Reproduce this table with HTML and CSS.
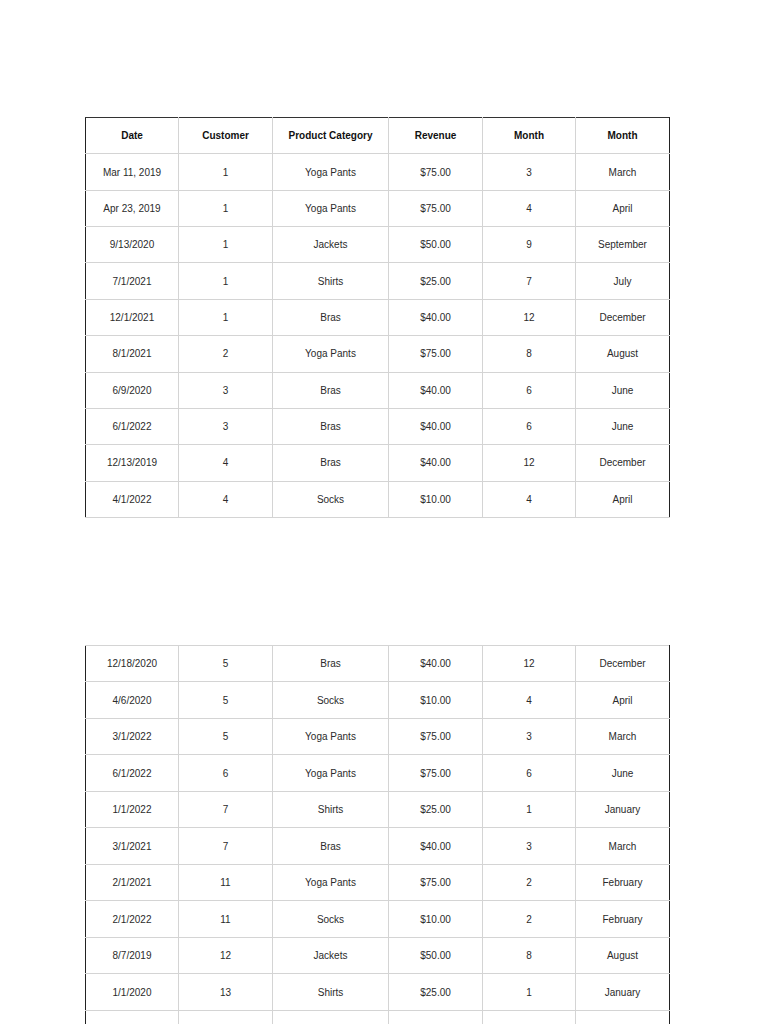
FILE: index.html
```html
<!DOCTYPE html>
<html lang="en">
<head>
<meta charset="utf-8">
<title>Sales table</title>
<link rel="stylesheet" href="styles.css">
</head>
<body>
<main class="page">
  <table class="sheet sheet-first">
    <colgroup>
      <col class="c-date"><col class="c-cust"><col class="c-cat"><col class="c-rev"><col class="c-mon"><col class="c-name">
    </colgroup>
    <thead>
      <tr><th>Date</th><th>Customer</th><th>Product Category</th><th>Revenue</th><th>Month</th><th>Month</th></tr>
    </thead>
    <tbody>
      <tr><td>Mar 11, 2019</td><td>1</td><td>Yoga Pants</td><td>$75.00</td><td>3</td><td>March</td></tr>
      <tr><td>Apr 23, 2019</td><td>1</td><td>Yoga Pants</td><td>$75.00</td><td>4</td><td>April</td></tr>
      <tr><td>9/13/2020</td><td>1</td><td>Jackets</td><td>$50.00</td><td>9</td><td>September</td></tr>
      <tr><td>7/1/2021</td><td>1</td><td>Shirts</td><td>$25.00</td><td>7</td><td>July</td></tr>
      <tr><td>12/1/2021</td><td>1</td><td>Bras</td><td>$40.00</td><td>12</td><td>December</td></tr>
      <tr><td>8/1/2021</td><td>2</td><td>Yoga Pants</td><td>$75.00</td><td>8</td><td>August</td></tr>
      <tr><td>6/9/2020</td><td>3</td><td>Bras</td><td>$40.00</td><td>6</td><td>June</td></tr>
      <tr><td>6/1/2022</td><td>3</td><td>Bras</td><td>$40.00</td><td>6</td><td>June</td></tr>
      <tr><td>12/13/2019</td><td>4</td><td>Bras</td><td>$40.00</td><td>12</td><td>December</td></tr>
      <tr><td>4/1/2022</td><td>4</td><td>Socks</td><td>$10.00</td><td>4</td><td>April</td></tr>
    </tbody>
  </table>

  <table class="sheet sheet-second">
    <colgroup>
      <col class="c-date"><col class="c-cust"><col class="c-cat"><col class="c-rev"><col class="c-mon"><col class="c-name">
    </colgroup>
    <tbody>
      <tr><td>12/18/2020</td><td>5</td><td>Bras</td><td>$40.00</td><td>12</td><td>December</td></tr>
      <tr><td>4/6/2020</td><td>5</td><td>Socks</td><td>$10.00</td><td>4</td><td>April</td></tr>
      <tr><td>3/1/2022</td><td>5</td><td>Yoga Pants</td><td>$75.00</td><td>3</td><td>March</td></tr>
      <tr><td>6/1/2022</td><td>6</td><td>Yoga Pants</td><td>$75.00</td><td>6</td><td>June</td></tr>
      <tr><td>1/1/2022</td><td>7</td><td>Shirts</td><td>$25.00</td><td>1</td><td>January</td></tr>
      <tr><td>3/1/2021</td><td>7</td><td>Bras</td><td>$40.00</td><td>3</td><td>March</td></tr>
      <tr><td>2/1/2021</td><td>11</td><td>Yoga Pants</td><td>$75.00</td><td>2</td><td>February</td></tr>
      <tr><td>2/1/2022</td><td>11</td><td>Socks</td><td>$10.00</td><td>2</td><td>February</td></tr>
      <tr><td>8/7/2019</td><td>12</td><td>Jackets</td><td>$50.00</td><td>8</td><td>August</td></tr>
      <tr><td>1/1/2020</td><td>13</td><td>Shirts</td><td>$25.00</td><td>1</td><td>January</td></tr>
      <tr><td>5/1/2021</td><td>14</td><td>Yoga Pants</td><td>$75.00</td><td>5</td><td>May</td></tr>
    </tbody>
  </table>
</main>
</body>
</html>
```

FILE: styles.css
```css
html, body {
  margin: 0;
  padding: 0;
  background: #ffffff;
}

body {
  font-family: "Liberation Sans", Arial, sans-serif;
  color: #2b2b2b;
  overflow: hidden;
}

.page {
  padding: 117px 0 0 85px;
}

.sheet {
  border-collapse: collapse;
  table-layout: fixed;
  width: 584px;
  font-size: 10px;
}

.sheet-second {
  margin-top: 127px;
}

.c-date { width: 93px; }
.c-cust { width: 94px; }
.c-cat  { width: 116px; }
.c-rev  { width: 94px; }
.c-mon  { width: 93px; }
.c-name { width: 94px; }

.sheet th,
.sheet td {
  border: 1px solid #d4d4d4;
  text-align: center;
  vertical-align: middle;
  padding: 0 4px;
  height: 36.36px;
  box-sizing: border-box;
  white-space: nowrap;
  overflow: hidden;
}

.sheet-second td {
  height: 36.5px;
}

.sheet th {
  font-weight: bold;
  color: #111111;
}

.sheet tr > :first-child {
  border-left: 1px solid #222222;
}

.sheet tr > :last-child {
  border-right: 1px solid #222222;
}

.sheet-first thead th {
  border-top: 1px solid #333333;
}
```
